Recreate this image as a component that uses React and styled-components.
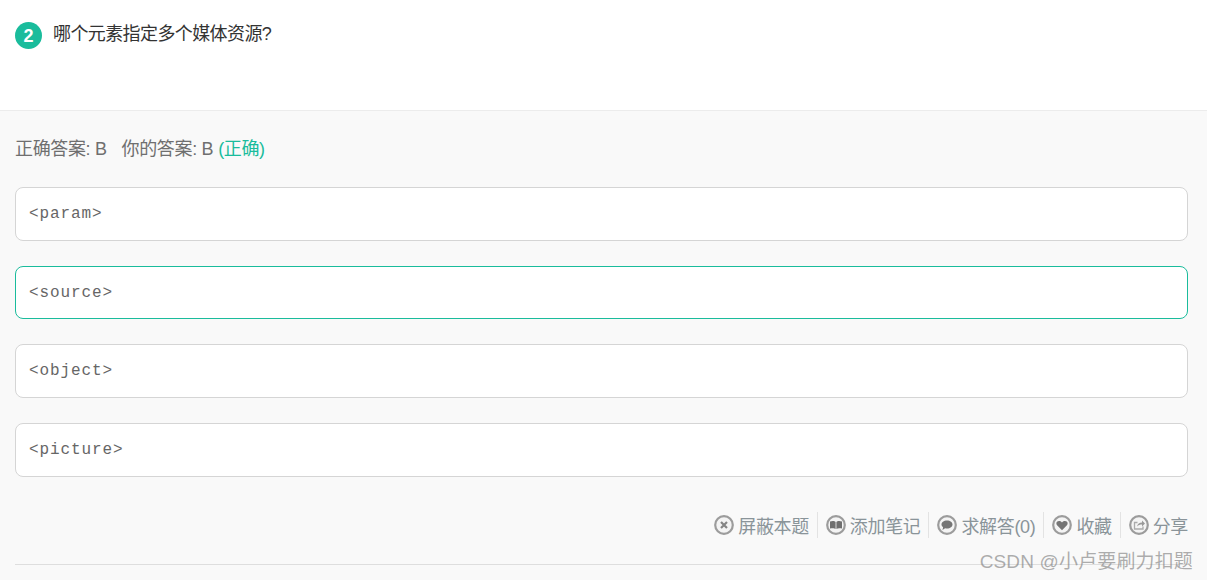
import React from "react";
import styled, { createGlobalStyle } from "styled-components";

const Global = createGlobalStyle`
  html, body { margin: 0; padding: 0; background: #f9f9f9; }
  body { font-family: "Liberation Sans", "Noto Sans CJK SC", sans-serif; overflow: hidden; }
`;
const Page = styled.div`position: relative; width: 1207px; height: 580px; overflow: hidden;`;
const Question = styled.section`
  box-sizing: border-box; height: 111px; background: #fff; border-bottom: 1px solid #ececec;
  padding: 22px 15px 0; display: flex; align-items: flex-start; gap: 11px;
`;
const Badge = styled.span`
  flex: none; width: 27px; height: 27px; padding-top: 1px; box-sizing: border-box; border-radius: 50%;
  background: #1abc9c; color: #fff; font-weight: 700;
  display: flex; align-items: center; justify-content: center; font-size: 18px;
`;
const QuestionText = styled.h2`
  margin: 0; font-size: 18px; line-height: 24px; font-weight: 400; color: #333;
  letter-spacing: -0.6px;
`;
const Body = styled.section`padding: 27px 15px 0 15px; width: 1173px; box-sizing: content-box;`;
const Summary = styled.p`
  margin: 0 0 27px; font-size: 18px; line-height: 22px; color: #6f6f6f; letter-spacing: -0.35px; display: flex;
`;
const Yours = styled.span`margin-left: 15px;`;
const Correct = styled.span`margin-left: 5px; color: #1abc9c;`;
const Options = styled.div`display: flex; flex-direction: column; gap: 25px;`;
const Option = styled.div`
  box-sizing: border-box; height: ${p => p.$h}px; background: #fff; border-radius: 8px;
  border: 1px solid ${p => (p.$active ? "#1abc9c" : "#d5d5d5")};
  padding: 0 13px; display: flex; align-items: center;
  font-family: "Liberation Mono", monospace; font-size: 16px; letter-spacing: 0.9px; color: #666;
`;
const Actions = styled.div`
  display: flex; justify-content: flex-end; align-items: center; margin-top: 35px; height: 26px;
`;
const Action = styled.button`
  all: unset; display: flex; align-items: center; gap: 4px; padding: 0 8px; height: 26px;
  font-size: 18px; color: #8a9499; letter-spacing: -0.35px;
  border-left: ${p => (p.$first ? "none" : "1px solid #e3e3e3")};
  &:last-child { padding-right: 0; }
`;
const Rule = styled.hr`margin: 26px 0 0; border: 0; border-top: 1px solid #dedede;`;
const Watermark = styled.div`
  position: absolute; right: 14px; top: 550px; font-size: 19px; line-height: 24px; color: rgba(120,120,120,.6);
  letter-spacing: 0.15px; white-space: nowrap;
`;

const Ic = ({ children }) => (
  <svg width="20" height="20" viewBox="0 0 20 20" style={{ flex: "none" }}>
    <circle cx="10" cy="10" r="8.8" fill="#f4f4f4" stroke="#9c9c9c" strokeWidth="2.2" />
    {children}
  </svg>
);
const icons = {
  block: <path d="M7 7l6 6M13 7l-6 6" stroke="#858585" strokeWidth="2.2" fill="none" />,
  book: <path d="M4 6.500c2-.8 4.500-.8 5.600.4v7.100c-1.100-1-3.600-1-5.600-.4zM16 6.500c-2-.8-4.500-.8-5.600.4v7.100c1.100-1 3.600-1 5.600-.4z" fill="#6f6f6f" />,
  chat: <path d="M10 5.500c3.300 0 5.500 1.800 5.500 4s-2.200 4-5.500 4c-.7 0-1.300-.1-1.900-.2L5.500 15l.6-2.800C5 11.400 4.500 10.500 4.500 9.500c0-2.200 2.200-4 5.500-4z" fill="#757575" />,
  heart: <path d="M10 15.200 5.300 10.500c-1.300-1.300-1.200-3.100 0-4 1.200-.9 3.300-.7 4.700 1 1.400-1.700 3.500-1.900 4.700-1 1.200.9 1.300 2.700 0 4z" fill="#757575" />,
  share: <g fill="none" stroke="#aaa" strokeWidth="1.300"><path d="M14 11.500v2.500H5.500V7.500h3" /><path d="M8 11.500c.5-2.500 2.500-4 5-4V5.500l3 3-3 3V9.500c-2 0-3.500.5-5 2z" fill="#999" stroke="none" /></g>,
};

export default function App() {
  return (
    <Page>
      <Global />
      <Question>
        <Badge>2</Badge>
        <QuestionText>哪个元素指定多个媒体资源?</QuestionText>
      </Question>
      <Body>
        <Summary>
          <span>正确答案: B</span>
          <Yours>你的答案: B</Yours>
          <Correct>(正确)</Correct>
        </Summary>
        <Options>
          <Option $h={54}>&lt;param&gt;</Option>
          <Option $h={53} $active>&lt;source&gt;</Option>
          <Option $h={54}>&lt;object&gt;</Option>
          <Option $h={54}>&lt;picture&gt;</Option>
        </Options>
        <Actions>
          <Action $first><Ic>{icons.block}</Ic>屏蔽本题</Action>
          <Action><Ic>{icons.book}</Ic>添加笔记</Action>
          <Action><Ic>{icons.chat}</Ic>求解答(0)</Action>
          <Action><Ic>{icons.heart}</Ic>收藏</Action>
          <Action><Ic>{icons.share}</Ic>分享</Action>
        </Actions>
        <Rule />
      </Body>
      <Watermark>CSDN @小卢要刷力扣题</Watermark>
    </Page>
  );
}
